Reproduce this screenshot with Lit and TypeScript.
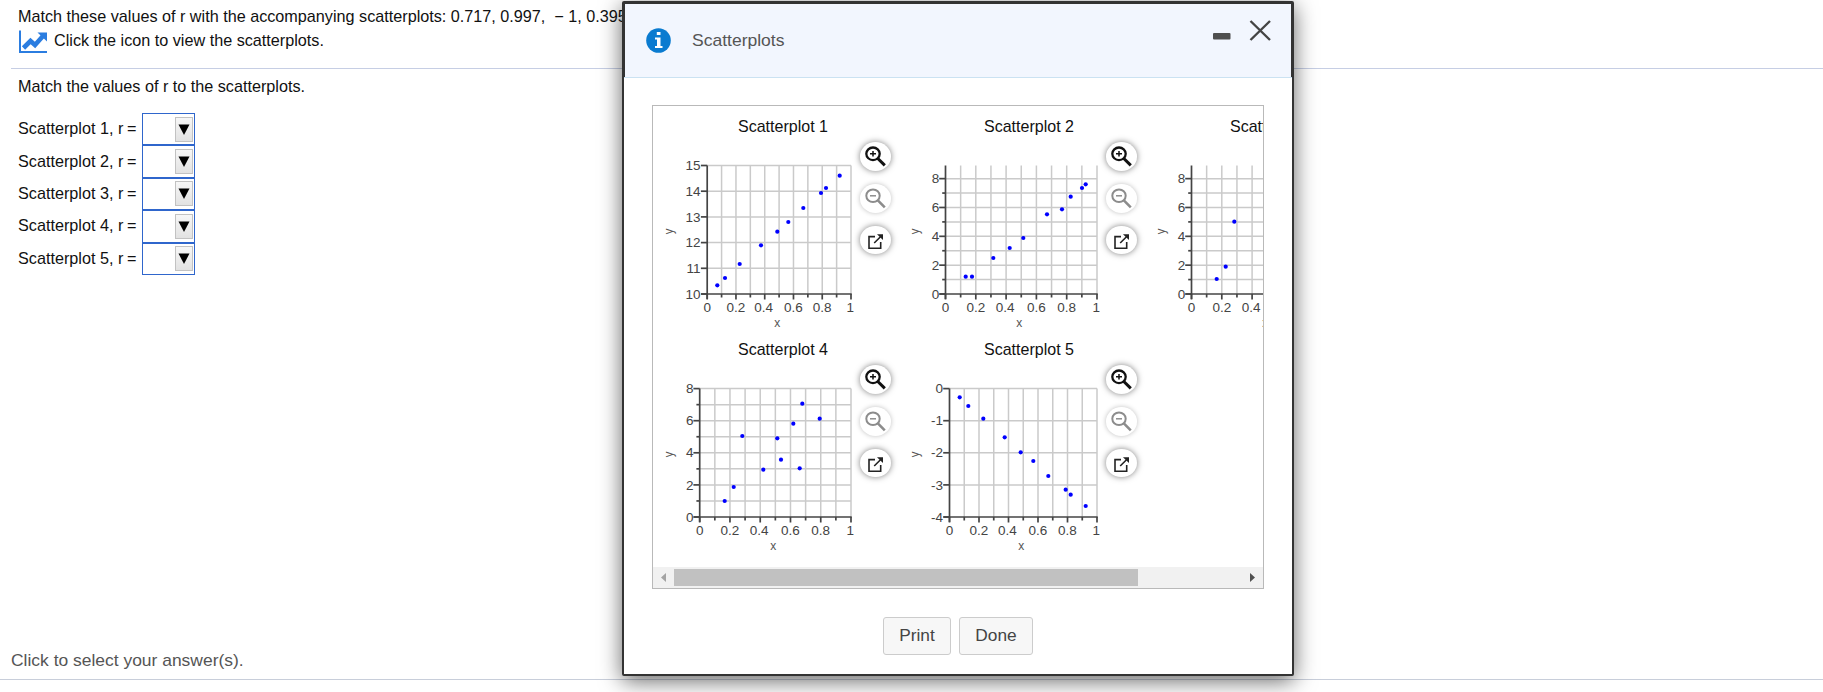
import { LitElement, html, svg, css } from "lit";
import { customElement, property } from "lit/decorators.js";

interface Plot {
  n: number;
  x0: number;
  x1: number;
  top: number;
  bottom: number;
  unit: number;
  lines: number;
  every: number;
  first: number;
  labelX: number;
  xX: number;
  dots: number[][];
}

const PLOTS: Plot[] = [
  { n: 1, x0: 54.2, x1: 198, top: 59.5, bottom: 188, unit: 25.7, lines: 5, every: 1, first: 10, labelX: 47.5, xX: 124.3,
    dots: [[64.3,179.3],[72,172],[86.7,158],[108,139.3],[124.3,125.7],[135.3,116],[150.3,102],[168,87],[173,82],[186.7,69.7]] },
  { n: 2, x0: 46.5, x1: 198, top: 59.5, bottom: 188, unit: 14.42, lines: 8, every: 2, first: 0, labelX: 40.3, xX: 120.3,
    dots: [[66.7,170.7],[73,170.7],[94.3,152],[110.7,142],[124.3,132],[148,108.3],[163,103.3],[171.7,90.7],[183,82],[186.7,78.3]] },
  { n: 3, x0: 46.5, x1: 198, top: 59.5, bottom: 188, unit: 14.42, lines: 8, every: 2, first: 0, labelX: 40.3, xX: 120.3,
    dots: [[71.7,173],[80.7,160.7],[89.3,115.7]] },
  { n: 4, x0: 46.7, x1: 198, top: 59.5, bottom: 188, unit: 16.05, lines: 8, every: 2, first: 0, labelX: 40.5, xX: 120.3,
    dots: [[71.7,172],[80.7,158],[110.3,140.7],[128,130.7],[146.7,139.3],[124.3,109.3],[140.3,94.7],[149.3,74.7],[166.7,89.7],[89.3,107]] },
  { n: 5, x0: 50.5, x1: 198, top: 59.5, bottom: 188, unit: 32.1, lines: 4, every: 1, first: -4, labelX: 44, xX: 122.3,
    dots: [[60.7,68.3],[69.3,77],[84.3,89.7],[105.7,108.3],[121.7,123.3],[134.3,132],[149.3,147],[166.7,160.7],[171.7,165.7],[186.7,177]] },
];

@customElement("scatter-plot")
export class ScatterPlot extends LitElement {
  @property({ attribute: false }) plot!: Plot;

  static styles = css`
    :host { display: flex; width: 246px; height: 223px; }
    .chart { width: 207px; height: 223px; flex: none; overflow: visible; font-family: "Liberation Sans", Arial, sans-serif; }
    .title { font-size: 15.7px; fill: #111; }
    .tick { font-size: 13.5px; fill: #444; }
    .name { font-size: 12px; fill: #555; }
    .grid { stroke: #cacaca; stroke-width: 1.5; }
    .axis { stroke: #444; stroke-width: 1.7; }
    .dot { fill: #0000ff; }
    .tools { display: flex; flex-direction: column; gap: 13px; padding-top: 36.3px; }
    .tool { display: flex; width: 31px; height: 28.7px; border-radius: 50%; background: #fff; box-shadow: 0 0 6px rgba(0, 0, 0, 0.5); }
    .tool.off { box-shadow: 0 0 5px rgba(0, 0, 0, 0.25); }
    .tool svg { width: 31px; height: 28.7px; }
  `;

  render() {
    const p = this.plot;
    const xs = Array.from({ length: 11 }, (_, i) => p.x0 + ((p.x1 - p.x0) * i) / 10);
    const ys = Array.from({ length: p.lines + 1 }, (_, i) => p.bottom - p.unit * i);
    const xLabels = ["0", "0.2", "0.4", "0.6", "0.8", "1"];
    return html`
      <svg class="chart" viewBox="0 0 207 223">
        <text class="title" x="85" y="26" textLength="90" lengthAdjust="spacingAndGlyphs">Scatterplot ${p.n}</text>
        ${xs.slice(1).map((x) => svg`<line class="grid" x1=${x} x2=${x} y1=${p.top} y2=${p.bottom}></line>`)}
        ${ys.slice(1).map((y) => svg`<line class="grid" x1=${p.x0} x2=${p.x1} y1=${y} y2=${y}></line>`)}
        <line class="axis" x1=${p.x0} x2=${p.x0} y1=${p.top} y2=${p.bottom + 5}></line>
        <line class="axis" x1=${p.x0 - 6} x2=${p.x1 + 0.7} y1=${p.bottom} y2=${p.bottom}></line>
        ${xs.map((x, i) => svg`<line class="axis" x1=${x} x2=${x} y1=${p.bottom} y2=${p.bottom + (i % 2 ? 3.5 : 5.5)}></line>`)}
        ${ys.map((y, i) => svg`<line class="axis" x1=${p.x0 - (i % p.every ? 3.3 : 6.3)} x2=${p.x0} y1=${y} y2=${y}></line>`)}
        ${ys.map((y, i) => i % p.every ? "" : svg`<text class="tick" x=${p.labelX} y=${y + 4.6} text-anchor="end">${p.first + i}</text>`)}
        ${xLabels.map((t, i) => svg`<text class="tick" x=${xs[i * 2] - (i === 2 ? 1 : i === 5 ? 0.7 : 0)} y="205.5" text-anchor="middle">${t}</text>`)}
        <text class="name" x=${p.xX} y="221" text-anchor="middle">x</text>
        <text class="name" transform="translate(16.5 125.3) rotate(-90) scale(0.95 1.1)" text-anchor="middle" dy="3.6">y</text>
        ${p.dots.map(([x, y]) => svg`<circle class="dot" cx=${x} cy=${y} r="2.1"></circle>`)}
      </svg>
      <div class="tools">
        <div class="tool">${this.lens("#111", true)}</div>
        <div class="tool off">${this.lens("#8c8c8c", false)}</div>
        <div class="tool">
          <svg viewBox="0 0 31 28.7" fill="none" stroke="#222" stroke-width="1.6">
            <path d="M15 10.6H9V22.2H20.7V16M14.2 17L20.5 10.8"></path>
            <path d="M17 8.2H23V14Z" fill="#222" stroke="none"></path>
          </svg>
        </div>
      </div>
    `;
  }

  lens(color: string, plus: boolean) {
    return html`<svg viewBox="0 0 31 28.7" fill="none" stroke=${color}>
      <ellipse cx="13" cy="11.8" rx="6.7" ry="6.3" stroke-width=${plus ? 2.3 : 2}></ellipse>
      <path d="M17.6 16.2L24.8 23.4" stroke-width=${plus ? 3 : 2.6}></path>
      <path d=${plus ? "M10 11.8H16M13 9V14.6" : "M10 11.8H16"} stroke-width="1.5"></path>
    </svg>`;
  }
}

@customElement("app-root")
export class AppRoot extends LitElement {
  static styles = css`
    :host { display: block; position: relative; width: 1823px; height: 692px; overflow: hidden; background: #fff;
      font-family: "Liberation Sans", Arial, sans-serif; font-size: 15.7px; color: #111; }
    .page { display: flex; flex-direction: column; height: 692px; }
    .t { display: inline-block; white-space: pre; transform: scaleX(1.032); transform-origin: 0 50%; }
    .line { padding-left: 18px; height: 24px; line-height: 24px; margin-top: 5px; white-space: nowrap; }
    .icon-line { display: flex; align-items: center; gap: 7px; padding-left: 19px; height: 24px; margin-top: 1px; }
    .icon-line .t { margin-top: -2px; }
    .icon-line svg { width: 28px; height: 24px; }
    .rule { height: 1px; background: #c6cee4; margin: 14px 0 0 11px; flex: none; }
    .prompt { padding-left: 18px; height: 24px; line-height: 24px; margin-top: 6px; }
    .rows { margin-top: 14px; }
    .row { display: flex; align-items: center; height: 32.4px; padding-left: 18px; }
    .label { width: 124px; line-height: 32px; }
    .select { box-sizing: border-box; display: flex; justify-content: flex-end; width: 53px; height: 32.4px; border: 1.4px solid #2f66cc; padding: 2.5px 1px 3px 0; }
    .drop { box-sizing: border-box; width: 18px; height: 25px; border: 1px solid #c2c2c2; background: linear-gradient(#f7f7f7, #e2e2e2); }
    .drop svg { display: block; width: 16px; height: 23px; }
    .eq { margin-left: -0.8px; }
    .hint { margin-top: auto; padding-left: 10.5px; font-size: 17px; color: #555; height: 24px; line-height: 24px; margin-bottom: 6px; }
    .hint .t { transform: scaleX(1.026); }
    .foot { height: 1px; background: #c8ceda; margin-bottom: 12px; flex: none; }
    .dialog { position: absolute; left: 622px; top: 1px; box-sizing: border-box; width: 672px; height: 675px; background: #fff;
      border: solid #333; border-width: 3px 2px 2.5px; border-radius: 2px; box-shadow: 0 5px 22px rgba(0, 0, 0, 0.6); display: flex; flex-direction: column; }
    .head { box-sizing: border-box; height: 74px; flex: none; background: #f2f6fe; border-bottom: 1px solid #cbe2f2; display: flex; padding-left: 22px; box-shadow: inset 1px 0 #333, inset -1px 0 #333; }
    .info { width: 25px; height: 25px; margin-top: 23.5px; }
    .heading { margin: 24.5px 0 0 21px; font-size: 17px; line-height: 24px; color: #555; width: 521px; }
    .heading .t { transform: scaleX(1.03); }
    .ctl { width: 60px; height: 30px; margin-top: 12px; }
    .frame { box-sizing: border-box; width: 612px; height: 484px; margin: 27px 0 0 28px; border: 1px solid #b9b9b9; display: flex; flex-direction: column; }
    .view { height: 461px; overflow: hidden; flex: none; }
    .grid { display: grid; grid-template-columns: repeat(3, 246px); grid-auto-rows: 223px; width: 738px; }
    .bar { display: flex; align-items: center; height: 21px; background: #f1f1f1; }
    .arrow { width: 21px; height: 21px; flex: none; }
    .thumb { width: 464px; height: 17px; background: #c1c1c1; }
    .bar .right { margin-left: auto; }
    .actions { display: flex; gap: 8px; margin: 28px 0 0 259px; }
    .btn { box-sizing: border-box; height: 38px; border: 1px solid #ccc; border-radius: 3px; background: #f7f7f7; color: #444; font: 17.3px/32px "Liberation Sans", Arial, sans-serif; padding: 0 0 3px; text-align: center; }
    .btn .t { transform: none; }
    .print { width: 68px; }
    .done { width: 74px; }
  `;

  render() {
    return html`
      <div class="page">
        <div class="line"><span class="t">Match these values of r with the accompanying scatterplots: 0.717, 0.997,  − 1, 0.395</span></div>
        <div class="icon-line">
          <svg viewBox="0 0 28 24">
            <path d="M1 0.5V22H28" fill="none" stroke="#2b7de0" stroke-width="2"></path>
            <path d="M4.5 18L11.5 11L16 15L24 6" fill="none" stroke="#2b7de0" stroke-width="4.6"></path>
            <path d="M18.5 2.5H28V11.5Z" fill="#2b7de0"></path>
          </svg>
          <span class="t">Click the icon to view the scatterplots.</span>
        </div>
        <div class="rule"></div>
        <div class="prompt"><span class="t">Match the values of r to the scatterplots.</span></div>
        <div class="rows">
          ${[1, 2, 3, 4, 5].map((n) => html`
            <div class="row">
              <div class="label"><span class="t">Scatterplot ${n}, r<span class="eq"> =</span></span></div>
              <div class="select"><div class="drop"><svg viewBox="0 0 16 23"><path d="M2.5 6.5H13.5L8 17Z" fill="#000"></path></svg></div></div>
            </div>`)}
        </div>
        <div class="hint"><span class="t">Click to select your answer(s).</span></div>
        <div class="foot"></div>
      </div>
      <div class="dialog">
        <div class="head">
          <svg class="info" viewBox="0 0 25 25">
            <circle cx="12.5" cy="12.5" r="12.3" fill="#0a7bd0"></circle>
            <path d="M10.8 4H14.5V7H10.8ZM9 9.5H14.5V18H16.5V20H9V18H11V11.5H9Z" fill="#fff"></path>
          </svg>
          <div class="heading"><span class="t">Scatterplots</span></div>
          <svg class="ctl" viewBox="0 0 60 30">
            <rect x="0" y="17" width="17.5" height="6.5" rx="1" fill="#4f4f4f"></rect>
            <path d="M37.5 5L57 24M57 5L37.5 24" stroke="#444" stroke-width="2.4" fill="none"></path>
          </svg>
        </div>
        <div class="frame">
          <div class="view"><div class="grid">${PLOTS.map((p) => html`<scatter-plot .plot=${p}></scatter-plot>`)}</div></div>
          <div class="bar">
            <svg class="arrow" viewBox="0 0 21 21"><path d="M13 6V15L8 10.5Z" fill="#a3a3a3"></path></svg>
            <div class="thumb"></div>
            <svg class="arrow right" viewBox="0 0 21 21"><path d="M8 6V15L13 10.5Z" fill="#505050"></path></svg>
          </div>
        </div>
        <div class="actions">
          <button class="btn print"><span class="t">Print</span></button>
          <button class="btn done"><span class="t">Done</span></button>
        </div>
      </div>
    `;
  }
}
